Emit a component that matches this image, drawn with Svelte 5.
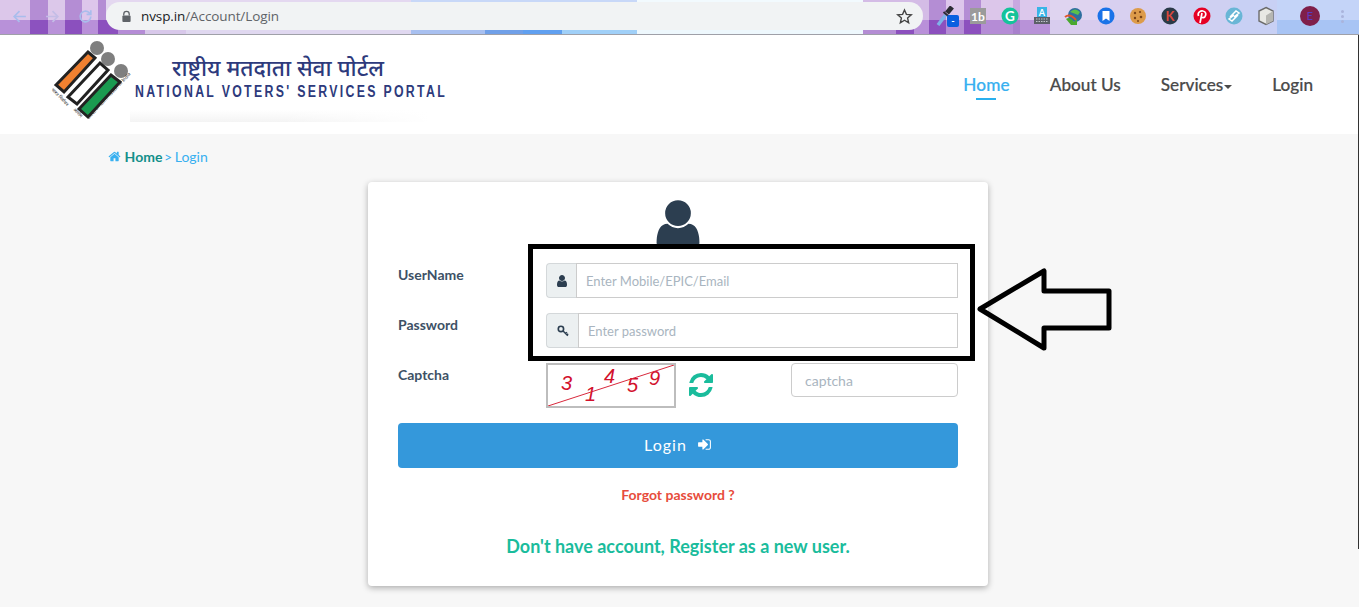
<script>
  const user = "M1536 1399q0 109-62.5 187t-150.5 78h-854q-88 0-150.5-78t-62.5-187q0-85 8.5-160.5t31.5-152 58.5-131 94-89 134.5-34.5q131 128 313 128t313-128q76 0 134.5 34.5t94 89 58.5 131 31.5 152 8.5 160.5zm-256-887q0 159-112.5 271.5t-271.5 112.5-271.5-112.5-112.5-271.5 112.5-271.5 271.5-112.5 271.5 112.5 112.5 271.5z";
  const home = "M1472 992v480q0 26-19 45t-45 19h-384v-384h-256v384h-384q-26 0-45-19t-19-45v-480q0-1 .5-3t.5-3l575-474 575 474q1 2 1 6zm223-69l-62 74q-8 9-21 11h-3q-13 0-21-7l-692-577-692 577q-12 8-24 7-13-2-21-11l-62-74q-8-10-7-23.5t11-21.5l719-599q32-26 76-26t76 26l244 204v-195q0-14 9-23t23-9h192q14 0 23 9t9 23v408l219 182q10 8 11 21.5t-7 23.5z";
  const refresh = "M1639 1056q0 5-1 7-64 268-268 434.5t-478 166.5q-146 0-282.5-55t-243.5-157l-129 129q-19 19-45 19t-45-19-19-45v-448q0-26 19-45t45-19h448q26 0 45 19t19 45-19 45l-137 137q71 66 161 102t187 36q134 0 250-65t186-179q11-17 53-117 8-23 30-23h192q13 0 22.5 9.5t9.5 22.5zm25-800v448q0 26-19 45t-45 19h-448q-26 0-45-19t-19-45 19-45l138-138q-148-137-349-137-134 0-250 65t-186 179q-11 17-53 117-8 23-30 23h-199q-13 0-22.5-9.5t-9.5-22.5v-7q65-268 270-434.5t480-166.5q146 0 284 55.5t245 156.5l130-129q19-19 45-19t45 19 19 45z";
  const signIn = "M1312 896q0 26-19 45l-544 544q-19 19-45 19t-45-19-19-45v-288h-448q-26 0-45-19t-19-45v-384q0-26 19-45t45-19h448v-288q0-26 19-45t45-19 45 19l544 544q19 19 19 45zm352-352v704q0 119-84.5 203.5t-203.5 84.5h-320q-13 0-22.5-9.5t-9.5-22.5q0-4-1-20t-.5-26.5 3-23.5 10-19.5 20.5-6.5h320q66 0 113-47t47-113v-704q0-66-47-113t-113-47h-288-11-13t-11.5-1-11.5-3-8-5.5-7-9-2-13.5q0-4-1-20t-.5-26.5 3-23.5 10-19.5 20.5-6.5h320q119 0 203.5 84.5t84.5 203.5z";
</script>

<div class="page">
  <div class="chrome">
    <div class="navbtns">
      <svg viewBox="0 0 16 16" class="nb"><path d="M14 8H3M8 3 3 8l5 5" /></svg>
      <svg viewBox="0 0 16 16" class="nb faint"><path d="M2 8h11M8 3l5 5-5 5" /></svg>
      <svg viewBox="0 0 16 16" class="nb"><path d="M13 8a5 5 0 1 1-1.6-3.7L13 6M13 2v4H9" /></svg>
    </div>
    <div class="omni">
      <svg viewBox="0 0 12 14" class="lock"><path d="M3 6V4.5a3 3 0 0 1 6 0V6" fill="none" stroke="#5f6368" stroke-width="1.4" /><rect x="1.5" y="6" width="9" height="7" rx="1" fill="#5f6368" /></svg>
      <span class="url"><b>nvsp.in</b>/Account/Login</span>
      <svg viewBox="0 0 16 16" class="star"><path d="M8 1.8 9.8 6l4.6.4-3.5 3 1 4.5L8 11.5 4.1 13.9l1-4.5-3.5-3L6.2 6z" /></svg>
    </div>
    <div class="exts">
      <span class="ext">
        <svg viewBox="0 0 20 20"><path d="M2 19 9.5 9" stroke="#7fb2e8" stroke-width="3.5" /><path d="M11 7l5-6" stroke="#2c2c34" stroke-width="5" /><path d="M7.5 6l6 5" stroke="#2c2c34" stroke-width="2" /></svg>
        <i class="badge">-</i>
      </span>
      <span class="ext"><svg viewBox="0 0 20 20"><rect x="2" y="2" width="16" height="16" fill="#9b9b9b" /><text x="10" y="14.5" class="t" font-size="12" fill="#fff" font-weight="700">1b</text></svg></span>
      <span class="ext"><svg viewBox="0 0 20 20"><circle cx="10" cy="10" r="8.5" fill="#15c39a" /><text x="10" y="15" class="t" font-size="13.5" fill="#fff" font-weight="700">G</text></svg></span>
      <span class="ext"><svg viewBox="0 0 20 20"><rect x="5" y="1" width="10" height="10" fill="#38b4e6" /><text x="10" y="9.5" class="t" font-size="9" fill="#fff" font-weight="700">A</text><rect x="2" y="11" width="16" height="7" fill="#5c6068" /><path d="M4 13h12M4 15.5h12" stroke="#c0c4cc" stroke-dasharray="1.5 1" /></svg></span>
      <span class="ext"><svg viewBox="0 0 20 20"><circle cx="11" cy="9" r="7" fill="#2e6f9e" /><path d="M6 6q5-5 10 0l-2 3-5-2z" fill="#5bc04a" /><path d="M1 11q5-4 11 3" fill="none" stroke="#e0562a" stroke-width="2" /><path d="M2 13q4-3 8 3l3-3v6H7z" fill="#49a82f" /></svg></span>
      <span class="ext"><svg viewBox="0 0 20 20"><circle cx="10" cy="10" r="8.5" fill="#1a73e8" /><path d="M6.5 5h7v10L10 12.5 6.5 15z" fill="#fff" /></svg></span>
      <span class="ext"><svg viewBox="0 0 20 20"><circle cx="10" cy="10" r="8" fill="#dd9b4a" /><circle cx="7" cy="7" r="1.2" fill="#7a4418" /><circle cx="12" cy="6" r="1.1" fill="#7a4418" /><circle cx="13" cy="11" r="1.3" fill="#7a4418" /><circle cx="7" cy="12" r="1.2" fill="#7a4418" /><circle cx="10" cy="15" r="1" fill="#7a4418" /></svg></span>
      <span class="ext"><svg viewBox="0 0 20 20"><circle cx="10" cy="10" r="8.5" fill="#2a3a48" /><text x="10" y="15" class="t" font-size="13" fill="#d8483c" font-weight="700">K</text></svg></span>
      <span class="ext"><svg viewBox="0 0 20 20"><circle cx="10" cy="10" r="8.5" fill="#e60023" /><path d="M8 17l2-10M6.5 10C5 6 9 4.5 11 5c3 .6 3.5 3.6 2 5.6-1.2 1.5-3.4 1.2-3.8-.2" fill="none" stroke="#fff" stroke-width="1.7" /></svg></span>
      <span class="ext"><svg viewBox="0 0 20 20"><circle cx="10" cy="10" r="8.5" fill="#68b6d6" /><path d="M6 11l6-6 3 2-5 4M14 9l-6 6-3-2 5-4" fill="none" stroke="#fff" stroke-width="1.5" /></svg></span>
      <span class="ext"><svg viewBox="0 0 20 20"><path d="M10 1.5 17 5v10l-7 3.5L3 15V5z" fill="#e8e8e4" stroke="#6c6c6c" stroke-width="1.4" /><path d="M10 9.5 17 5v10l-7 3.5z" fill="#b6b6b2" /></svg></span>
    </div>
    <span class="me"><svg viewBox="0 0 20 20"><circle cx="10" cy="10" r="10" fill="#7f1f4a" /><text x="10" y="14" class="t" font-size="11" fill="#5a3cc0">E</text></svg></span>
    <span class="dots"><i></i><i></i><i></i></span>
  </div>

  <header>
    <svg class="brand" viewBox="40 35 540 99" width="540" height="99">
      <defs>
        <linearGradient id="fade" x1="0" y1="0" x2="0" y2="1"><stop offset="0" stop-color="#fff" /><stop offset="1" stop-color="#f4f4f4" /></linearGradient>
        <linearGradient id="fadeR" x1="0" y1="0" x2="1" y2="0"><stop offset="0.5" stop-color="#fff" stop-opacity="0" /><stop offset="1" stop-color="#fff" /></linearGradient>
      </defs>
      <rect x="130" y="110" width="300" height="12" fill="url(#fade)" />
      <rect x="130" y="110" width="300" height="12" fill="url(#fadeR)" />
      <circle cx="97" cy="48" r="7" fill="#7f7f7f" />
      <circle cx="108" cy="59" r="7" fill="#7f7f7f" />
      <circle cx="121" cy="71" r="7" fill="#7f7f7f" />
      <polygon points="56,85 88,52 95,58 64,92" fill="#f08030" stroke="#222" stroke-width="3" />
      <polygon points="68,97 100,63 108,70 77,104" fill="#fff" stroke="#222" stroke-width="3" />
      <polygon points="79,109 111,75 120,82 88,117" fill="#1a9a50" stroke="#222" stroke-width="3" />
      <text class="tiny" transform="translate(51 90) rotate(46)">भारत निर्वाचन</text>
      <text class="tiny" transform="translate(73 110) rotate(46)">आयोग</text>
      <text class="tiny" transform="translate(89 119) rotate(-47)">Election Commission of India</text>
      <text class="hi" x="172" y="76">राष्ट्रीय मतदाता सेवा पोर्टल</text>
      <text class="en" x="135" y="97" textLength="312" lengthAdjust="spacingAndGlyphs">NATIONAL VOTERS' SERVICES PORTAL</text>
    </svg>
    <nav>
      <a class="active" href="#home">Home</a>
      <a href="#about">About Us</a>
      <a href="#services">Services<i class="caret"></i></a>
      <a href="#login">Login</a>
    </nav>
  </header>

  <main>
    <div class="crumb">
      <svg viewBox="0 0 1792 1792" class="crumb-ico"><path d={home} /></svg>
      <b>Home</b> <span>&gt; Login</span>
    </div>

    <section class="card">
      <div class="avatar"><svg viewBox="0 0 1792 1792"><path d={user} /></svg></div>

      <div class="row">
        <label for="u">UserName</label>
        <div class="group">
          <span class="addon"><svg viewBox="0 0 1792 1792"><path d={user} /></svg></span>
          <input id="u" placeholder="Enter Mobile/EPIC/Email" />
        </div>
      </div>
      <div class="row">
        <label for="p">Password</label>
        <div class="group">
          <span class="addon wide">
            <svg viewBox="0 0 14 14" class="key"><circle cx="4.6" cy="4.6" r="3.1" fill="none" stroke="#2c3e50" stroke-width="1.9" /><path d="M6.8 6.8 12.6 12.6M10 10l1.6-1.6M11.6 11.6l1.4-1.4" stroke="#2c3e50" stroke-width="1.7" fill="none" /></svg>
          </span>
          <input id="p" placeholder="Enter password" />
        </div>
      </div>
      <div class="row captcha">
        <label for="c">Captcha</label>
        <div class="cap-cells">
          <svg class="capimg" viewBox="0 0 126 41" width="130" height="45">
            <g class="digits">
              <text x="13" y="25" font-size="20">3</text>
              <text x="37" y="36" font-size="20">1</text>
              <text x="56" y="18" font-size="20">4</text>
              <text x="79" y="27" font-size="20">5</text>
              <text x="101" y="20" font-size="20">9</text>
            </g>
            <line x1="0" y1="41" x2="126" y2="0" stroke="#d8283c" stroke-width="1" />
          </svg>
          <svg viewBox="0 0 1792 1792" class="refresh"><path d={refresh} /></svg>
          <input id="c" placeholder="captcha" />
        </div>
      </div>

      <button type="button">Login <svg viewBox="0 0 1792 1792"><path d={signIn} /></svg></button>

      <a class="forgot" href="#forgot">Forgot password ?</a>
      <a class="register" href="#register">Don't have account, Register as a new user.</a>
    </section>
  </main>

  <div class="callout-box"></div>
  <svg class="callout-arrow" viewBox="0 0 140 90" width="140" height="90">
    <path d="M4 43 68 5V25H133V62H68V82Z" fill="none" stroke="#000" stroke-width="5" stroke-linejoin="round" />
  </svg>
  <div class="edge"></div>
</div>

<style>
  :global(body) { margin: 0; background: #f7f7f7; font-family: Lato, "Liberation Sans", sans-serif; }
  .page { position: relative; width: 1359px; height: 607px; overflow: hidden; background: #f7f7f7; }

  .chrome {
    display: flex; align-items: center; box-sizing: border-box; padding: 2px 0 4px;
    border-bottom: 1px solid #9fa0a8;
    height: 35px;
    background:
      linear-gradient(90deg, #b891d9 0 30px, #8c52bf 30px 48px, #b992d9 48px 65px, #8b50be 65px 82px, #b990d9 82px 98px, #8c50be 98px 118px, #b58cd6 118px 145px, #d8c8ea 145px 186px, #e0d8f0 186px 411px, #a8c0f0 411px 485px, #70a0e8 485px 523px, #60a0f0 523px 562px, #a0d0f8 562px 637px, #eef8fd 637px 863px, #b48dd4 863px 896px, #8c50be 896px 914px, #b990d9 914px 929px, #8c50be 929px 946px, #b58cd6 946px 964px, #8c50be 964px 981px, #b58cd6 981px 1013px, #a880cc 1013px 1020px, #b892d8 1020px 1050px, #d8ccee 1050px 1100px, #d2c8ee 1100px 1170px, #cfd0f2 1170px 1230px, #c8d0f4 1230px 1277px, #a8c4f4 1277px) 0 20px / 100% 15px no-repeat,
      linear-gradient(90deg, #dcc7ea 0 30px, #b48dd4 30px 48px, #dcc8ea 48px 65px, #b48dd4 65px 82px, #ddc6eb 82px 98px, #b48dd4 98px 106px, #e4d8f0 106px 411px, #c8d8f8 411px 637px, #f2fafe 637px 863px, #d4bce6 863px 929px, #b48dd4 929px 946px, #ddc6eb 946px 964px, #b48dd4 964px 981px, #dcc6ea 981px 1013px, #c8a8e0 1013px 1020px, #dcc8ec 1020px 1050px, #dfd4f0 1050px 1110px, #d8d0f0 1110px 1170px, #cfd0f2 1170px 1230px, #c8d0f4 1230px 1277px, #c4d4f8 1277px) 0 0 / 100% 20px no-repeat;
  }
  .navbtns { width: 106px; display: flex; padding-left: 11px; gap: 16px; box-sizing: border-box; }
  .nb { width: 17px; height: 17px; fill: none; stroke: #a9bdec; stroke-width: 1.6; flex: none; }
  .nb.faint { stroke: #c4bde6; }
  .omni { width: 817px; height: 28px; border-radius: 14px; background: #f1f3f4; display: flex; align-items: center; box-sizing: border-box; padding: 0 10px 0 15px; flex: none; }
  .lock { width: 11px; height: 13px; flex: none; }
  .url { margin-left: 9px; font: 13.5px "Open Sans", sans-serif; color: #5f6368; letter-spacing: -.1px; flex: 1; }
  .url b { font-weight: 400; color: #202124; }
  .star { width: 17px; height: 17px; fill: none; stroke: #444; stroke-width: 1.3; }

  .exts { display: flex; margin-left: 7px; }
  .ext { position: relative; width: 32px; height: 20px; display: flex; justify-content: center; flex: none; }
  .ext svg { width: 20px; height: 20px; }
  .t { text-anchor: middle; font-family: Lato, sans-serif; }
  .badge { position: absolute; left: 17px; top: 9px; width: 12px; height: 12px; background: #0a5fe0; border-radius: 2px; color: #fff; font: 700 9px/11px Lato, sans-serif; text-align: center; }
  .me { margin-left: 18px; width: 20px; height: 20px; flex: none; }
  .me svg { width: 20px; height: 20px; display: block; }
  .dots { margin-left: 21px; display: flex; flex-direction: column; gap: 2px; }
  .dots i { width: 3px; height: 3px; border-radius: 50%; background: #aab4dc; }

  header { height: 99px; background: #fff; display: flex; justify-content: space-between; padding: 0 46px 0 40px; box-sizing: border-box; }
  .brand { display: block; flex: none; }
  .hi { font: 500 22.6px "Noto Sans", "Noto Sans Devanagari", sans-serif; fill: #2d3a7c; }
  .en { font: 700 16px "Liberation Sans", sans-serif; fill: #2d3a7c; letter-spacing: 3px; }
  .tiny { font: 4.5px "Noto Sans", sans-serif; fill: #222; }
  nav { display: flex; gap: 40px; padding-top: 39px; }
  nav a { position: relative; font-size: 17.2px; line-height: 22px; height: 22px; color: #4a4a4a; text-decoration: none; font-weight: 500; -webkit-text-stroke: .2px #4a4a4a; }
  nav a.active { color: #38b0f0; -webkit-text-stroke: .2px #38b0f0; letter-spacing: .1px; }
  nav a.active::after { content: ""; position: absolute; left: 13px; width: 20px; top: 24px; height: 2px; background: #29b0ee; }
  .caret { display: inline-block; border: 4px solid transparent; border-top-color: #4a4a4a; border-bottom: 0; margin-left: 1px; vertical-align: 2px; }

  main { padding-top: 14px; }
  .crumb { padding-left: 108px; font-size: 14px; line-height: 18px; height: 34px; color: #38b0f0; word-spacing: -1px; }
  .crumb-ico { width: 13px; height: 13px; fill: #38b0f0; vertical-align: -1px; }
  .crumb b { color: #138f8a; font-weight: 700; margin-left: 1px; }
  .crumb span { margin-left: -1px; }

  .card { width: 620px; height: 404px; margin-left: 368px; background: #fff; border-radius: 4px; box-shadow: 0 2px 6px rgba(0,0,0,.3); padding: 14px 30px 0; box-sizing: border-box; display: flex; flex-direction: column; }
  .avatar { height: 53px; margin-bottom: 14px; display: flex; justify-content: center; overflow: hidden; flex: none; }
  .avatar svg { width: 60px; height: 60px; fill: #2c3e50; flex: none; }

  .row { display: grid; grid-template-columns: 148px 412px; margin-bottom: 15px; }
  label { font-size: 14px; font-weight: 700; color: #3d5166; line-height: 18px; padding-top: 3px; }
  .group { display: flex; height: 35px; }
  .addon { width: 30px; box-sizing: border-box; background: #ecf0f1; border: 1px solid #d4d8da; border-right: 0; border-radius: 4px 0 0 4px; display: flex; align-items: center; justify-content: center; flex: none; }
  .addon.wide { width: 32px; }
  .addon svg { width: 14px; height: 14px; fill: #2c3e50; }
  .addon .key { width: 12px; height: 12px; }
  input { font: 14px Lato, sans-serif; color: #333; outline: none; box-sizing: border-box; background: #fff; min-width: 0; }
  input::placeholder { color: #a9b5c0; opacity: 1; }
  .group input { flex: 1; height: 35px; border: 1px solid #ccc; padding: 0 9px; font-size: 13px; }
  .cap-cells { display: flex; align-items: flex-start; }
  .capimg { width: 130px; height: 45px; box-sizing: border-box; border: 2px solid #bdbdbd; flex: none; background: #fff; }
  .digits text { font-family: "Liberation Sans", sans-serif; font-style: italic; fill: #d2102c; }
  .refresh { width: 28px; height: 28px; margin: 8px 0 0 11px; fill: #1abc9c; flex: none; }
  .cap-cells input { width: 167px; height: 34px; margin-left: 76px; border: 1px solid #ccc; border-radius: 4px; padding: 0 13px; flex: none; }

  button { height: 45px; background: #3498db; border: 0; border-radius: 4px; color: #fff; font: 16px Lato, sans-serif; letter-spacing: 1px; display: flex; align-items: center; justify-content: center; gap: 10px; flex: none; padding: 0 0 2px; }
  button svg { width: 15px; height: 15px; fill: #fff; }
  .forgot { margin-top: 18px; text-align: center; font-size: 14px; line-height: 18px; font-weight: 700; color: #e74c3c; text-decoration: none; }
  .register { margin-top: 30px; text-align: center; font-size: 18px; line-height: 24px; font-weight: 700; color: #1abc9c; text-decoration: none; }

  .callout-box { position: absolute; left: 528px; top: 244px; width: 447px; height: 117px; box-sizing: border-box; border: 5px solid #000; }
  .callout-arrow { position: absolute; left: 976px; top: 266px; }
  .edge { position: absolute; right: 0; top: 35px; width: 1px; height: 514px; background: #333; }
</style>
